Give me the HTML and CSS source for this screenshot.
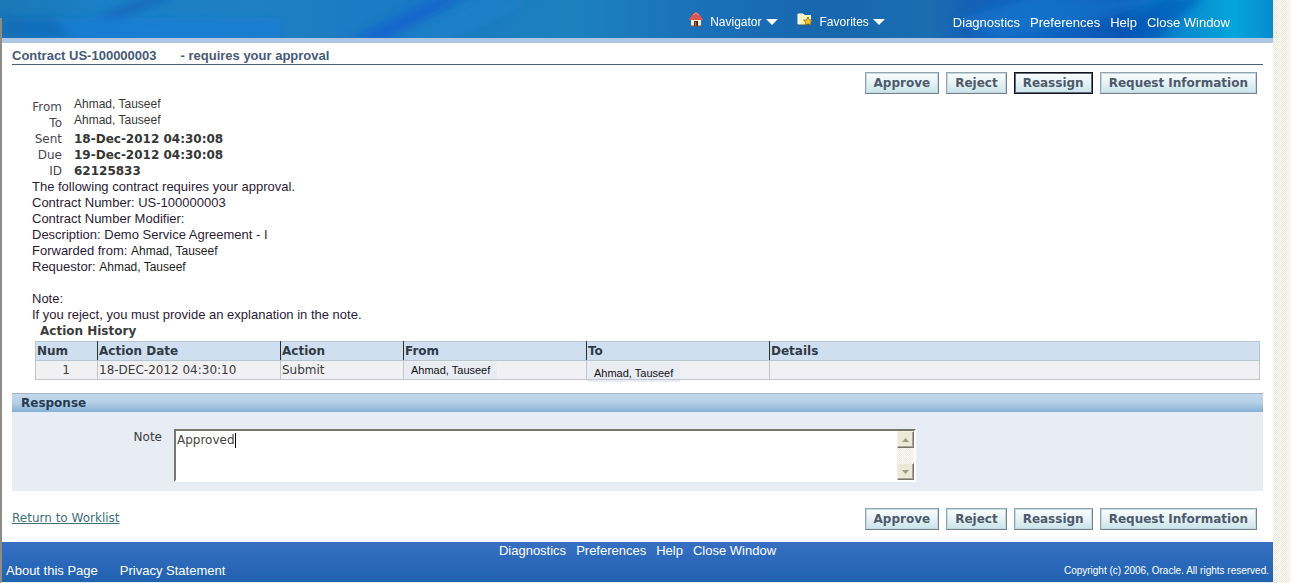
FILE: index.html
```html
<!DOCTYPE html>
<html lang="en">
<head>
<meta charset="utf-8">
<title>Contract approval</title>
<link rel="stylesheet" href="styles.css">
</head>
<body>
<div class="window">
<div class="page">
  <header class="banner">
    <svg class="banner-art" viewBox="0 0 1273 38" preserveAspectRatio="none" aria-hidden="true">
      <defs>
        <linearGradient id="sky" x1="0" x2="1" y1="0" y2="0">
          <stop offset="0" stop-color="#1b78b6"/><stop offset=".08" stop-color="#1a80c6"/><stop offset=".2" stop-color="#1f80c2"/><stop offset=".32" stop-color="#1b78c4"/><stop offset=".45" stop-color="#1c82be"/><stop offset=".54" stop-color="#1a72ba"/><stop offset=".65" stop-color="#1766ae"/><stop offset=".73" stop-color="#1a6eb0"/><stop offset=".76" stop-color="#1560b6"/><stop offset=".81" stop-color="#0f66c2"/><stop offset=".88" stop-color="#0a56b4"/><stop offset=".93" stop-color="#078ad0"/><stop offset=".97" stop-color="#06a5dc"/><stop offset="1" stop-color="#068ad0"/>
        </linearGradient>
        <filter id="soft" x="-20%" y="-50%" width="140%" height="200%"><feGaussianBlur stdDeviation="4"/></filter>
      </defs>
      <rect width="1273" height="38" fill="url(#sky)"/>
      <g filter="url(#soft)">
        <path d="M92 18 150 -4H176L118 18Z" fill="#165ab8" opacity=".65"/>
        <path d="M20 18H280V40H20Z" fill="#147bdc" opacity=".55"/>
        <path d="M2 18H55L70 38H2Z" fill="#1268b4" opacity=".7"/>
        <path d="M350 40 442 -4H466L385 40Z" fill="#1560d0" opacity=".75"/>
        <path d="M395 40 480 0H530L450 40Z" fill="#1882ca" opacity=".7"/>
        <path d="M955 20 1040 -4H1170L1100 20 1000 38Z" fill="#187ed2" opacity=".5"/>
        <path d="M1110 40 1165 -4H1205L1155 40Z" fill="#094eb4" opacity=".5"/>
      </g>
    </svg>
    <nav class="banner-nav" aria-label="Main">
      <button class="menu" type="button">
        <svg class="menu-icon" width="14" height="15" viewBox="0 0 14 15" aria-hidden="true"><path d="M3 1h2v3H3z" fill="#8d3035"/><path d="M2 7h10v7H2z" fill="#f4ebcf"/><path d="M0 7 4 2 7 0l3 2 4 5v1H0z" fill="#d95752"/><path d="M4 3 7 1l3 2" stroke="#ee8f82" fill="none"/><path d="M5 9h4v5H5z" fill="#5c2a20"/><path d="M6.500 10v4" stroke="#a8744a"/><path d="M2 14h10" stroke="#7e552f"/></svg>
        <span>Navigator</span>
        <svg width="12" height="6" viewBox="0 0 12 6" aria-hidden="true"><path d="M0 0h12L6 6z" fill="#fff"/></svg>
      </button>
      <button class="menu" type="button">
        <svg class="menu-icon" width="16" height="14" viewBox="0 0 16 14" aria-hidden="true"><path d="M1 1h5l2 1h6v9H1z" fill="#f7f5bf"/><path d="M1 11V1h5l1 1" stroke="#fff" fill="none"/><path d="M1 11.500h8" stroke="#a9a775"/><path d="m11 4 1.300 2.900 3.200.3-2.400 2.100.7 3.200-2.800-1.700-2.800 1.700.7-3.200-2.400-2.100 3.200-.3z" fill="#f7c821" stroke="#77580c" stroke-width=".7"/></svg>
        <span>Favorites</span>
        <svg width="12" height="6" viewBox="0 0 12 6" aria-hidden="true"><path d="M0 0h12L6 6z" fill="#fff"/></svg>
      </button>
    </nav>
    <nav class="links banner-links" aria-label="Tools">
      <a href="#diagnostics">Diagnostics</a><a href="#preferences">Preferences</a><a href="#help">Help</a><a href="#close">Close Window</a>
    </nav>
  </header>

  <main class="content">
    <h1 class="title"><span>Contract US-100000003</span><span>- requires your approval</span></h1>
    <div class="actions">
      <button class="btn" type="button">Approve</button><button class="btn" type="button">Reject</button><button class="btn btn-default" type="button">Reassign</button><button class="btn" type="button">Request Information</button>
    </div>

    <section class="notice">
      <dl class="facts">
        <dt>From</dt><dd class="person">Ahmad, Tauseef</dd>
        <dt>To</dt><dd class="person">Ahmad, Tauseef</dd>
        <dt>Sent</dt><dd>18-Dec-2012 04:30:08</dd>
        <dt>Due</dt><dd>19-Dec-2012 04:30:08</dd>
        <dt>ID</dt><dd>62125833</dd>
      </dl>
      <p>The following contract requires your approval.<br>Contract Number: US-100000003<br>Contract Number Modifier:<br>Description: Demo Service Agreement - I<br>Forwarded from: <span class="name">Ahmad, Tauseef</span><br>Requestor: <span class="name">Ahmad, Tauseef</span></p>
      <p class="note-text">Note:<br>If you reject, you must provide an explanation in the note.</p>
    </section>

    <section class="history">
      <h2>Action History</h2>
      <table>
        <colgroup><col class="c-num"><col class="c-date"><col class="c-action"><col class="c-from"><col class="c-to"><col></colgroup>
        <thead><tr><th>Num</th><th>Action Date</th><th>Action</th><th>From</th><th>To</th><th>Details</th></tr></thead>
        <tbody><tr><td class="num">1</td><td>18-DEC-2012 04:30:10</td><td>Submit</td><td class="who"><span>Ahmad, Tauseef</span></td><td class="who who-to"><span>Ahmad, Tauseef</span></td><td></td></tr></tbody>
      </table>
    </section>

    <section class="response">
      <h2>Response</h2>
      <div class="field">
        <label for="note">Note</label>
        <div class="editor">
          <textarea id="note" spellcheck="false">Approved</textarea>
          <span class="caret"></span>
          <div class="scroller">
            <button type="button" aria-label="Scroll up"><svg width="7" height="4" viewBox="0 0 7 4"><path d="M0 4 3.500 0 7 4z" fill="#a09d84"/></svg></button>
            <button type="button" aria-label="Scroll down"><svg width="7" height="4" viewBox="0 0 7 4"><path d="M0 0h7L3.500 4z" fill="#a09d84"/></svg></button>
          </div>
        </div>
      </div>
    </section>

    <div class="bottom">
      <a class="return" href="#worklist">Return to Worklist</a>
      <div class="actions">
        <button class="btn" type="button">Approve</button><button class="btn" type="button">Reject</button><button class="btn" type="button">Reassign</button><button class="btn" type="button">Request Information</button>
      </div>
    </div>
  </main>

  <footer class="footer">
    <nav class="links footer-links" aria-label="Footer">
      <a href="#diagnostics">Diagnostics</a><a href="#preferences">Preferences</a><a href="#help">Help</a><a href="#close">Close Window</a>
    </nav>
    <div class="legal">
      <a href="#about">About this Page</a><a href="#privacy">Privacy Statement</a>
      <small>Copyright (c) 2006, Oracle. All rights reserved.</small>
    </div>
  </footer>
</div>
<div class="gutter"></div>
</div>
</body>
</html>
```
FILE: styles.css
```css
* { box-sizing: border-box; }
body { margin: 0; background: #fff; color: #3c3c3c; font: 12px/16px "DejaVu Sans", sans-serif; }
h1, h2, p, dl, dd { margin: 0; }
button { font: inherit; cursor: pointer; }
.window { display: flex; min-height: 100vh; }
.page { flex: 1; min-width: 0; display: flex; flex-direction: column; }
.gutter { width: 19px; background: repeating-conic-gradient(#ece9dc 0 25%, #fffefa 0 50%) 0 0 / 2px 2px; border-right: 2px solid #fdfcf7; }

.banner { position: relative; height: 43px; flex: none; display: flex; align-items: flex-start; justify-content: flex-end; border-bottom: 5px solid #afc6e2; padding: 12px 43px 0 0; color: #fff; font: 12px/20px "Liberation Sans", sans-serif; }
.banner::before { content: ""; position: absolute; z-index: 1; left: 0; top: 18px; width: 2px; height: 25px; background: #8d8d87; }
.banner-art { position: absolute; inset: 0; width: 100%; height: 100%; }
.banner-nav { position: relative; display: flex; gap: 19px; margin-right: 68px; }
.menu { display: flex; align-items: center; gap: 4px; padding: 0; border: 0; background: none; color: inherit; }
.menu-icon { margin: 0 3px 5px 0; }
.links { display: flex; gap: 10px; font: 13px/16px "Liberation Sans", sans-serif; }
.links a, .legal a { color: #fff; text-decoration: none; }
.banner-links { position: relative; padding-top: 3px; }

.content { border-left: 2px solid #8d8d87; padding: 5px 10px 12px; flex: 1; }
.title { display: flex; gap: 24px; border-bottom: 1px solid #4a5f7e; color: #465a77; font: bold 13px/16px "Liberation Sans", sans-serif; }
.actions { display: flex; justify-content: flex-end; gap: 7px; padding: 7px 6px 0 0; }
.btn { height: 22px; padding: 0 8px; border: 1px solid #74818d; border-top-color: #96a6b0; border-left-color: #96a6b0; box-shadow: inset 0 0 0 1px #c3d8df; background: linear-gradient(#fafdfd, #e6f2f5 50%, #c8e4eb); color: #4d5a6c; font: bold 12px/18px "DejaVu Sans", sans-serif; }
.btn-default { border-color: #10131c; box-shadow: inset 0 0 0 1px #626b7b; }

.notice { padding: 5px 0 0 20px; color: #2c1b37; font: 13px/16px "Liberation Sans", sans-serif; }
.facts { display: grid; grid-template-columns: 30px 1fr; column-gap: 12px; font: 12px/16px "DejaVu Sans", sans-serif; color: #4c4550; }
.facts dt { text-align: right; }
.facts dd { font-weight: bold; color: #363636; }
.facts .person { font: 12px/16px "Liberation Sans", sans-serif; margin-top: -3px; }
.name { color: #222; font-size: 12px; }
.note-text { margin-top: 16px; }

.history { padding: 0 3px 0 23px; font-size: 12px; }
.history h2 { font-size: 12px; line-height: 16px; padding-left: 5px; margin-bottom: 2px; }
.history table { width: 100%; table-layout: fixed; border-collapse: collapse; border: 1px solid #bdc3c9; background: #f1f0f3; }
.history th, .history td { height: 19px; padding: 0 1px; text-align: left; line-height: 17px; white-space: nowrap; border: 1px solid #c5c5c9; }
.history th { background: #cfdfef; border-color: #b9c6cf; color: #303a46; }
.history th:not(:last-child) { border-right-color: #26303a; }
.c-num { width: 62px; } .c-date { width: 183px; } .c-action { width: 123px; } .c-from { width: 183px; } .c-to { width: 183px; }
.history .num { text-align: right; padding-right: 27px; }
.history .who span { display: block; width: 93px; margin-left: -1px; padding-left: 7px; background: #eaecf5; color: #111; font: 11px/17px "Liberation Sans", sans-serif; }
.history .who-to span { margin-bottom: -3px; padding-top: 3px; }

.response { margin-top: 13px; background: #e8edf5; min-height: 98px; }
.response h2 { height: 19px; padding-left: 9px; border-top: 1px solid #9fb6ca; background: linear-gradient(#c5d8ea, #b4cfe5 50%, #86b0d5); color: #273b50; font-size: 12px; line-height: 19px; }
.field { display: flex; gap: 12px; padding-top: 17px; font-size: 12px; }
.field label { width: 150px; text-align: right; }
.editor { position: relative; display: flex; width: 742px; height: 53px; border: 2px solid; border-color: #77766d #fff #fff #77766d; background: #fff; }
.editor textarea { flex: 1; resize: none; border: 0; outline: 0; padding: 1px; background: #fff; color: #444; font: 12px/16px "DejaVu Sans", sans-serif; overflow: hidden; }
.caret { position: absolute; left: 59px; top: 2px; width: 1px; height: 15px; background: #000; }
.scroller { display: flex; flex-direction: column; justify-content: space-between; width: 17px; background: repeating-conic-gradient(#ece9dc 0 25%, #fffefa 0 50%) 0 0 / 2px 2px; }
.scroller button { display: flex; align-items: center; justify-content: center; width: 17px; height: 17px; padding: 0; background: #ece9d8; border: 1px solid; border-color: #f3f1e6 #77766d #77766d #f3f1e6; box-shadow: inset -1px -1px #aaa792; }

.bottom { display: flex; justify-content: space-between; align-items: flex-start; padding-top: 10px; }
.return { color: #3d7079; font-size: 12px; margin-top: 9px; }
.footer { flex: none; height: 41px; background: linear-gradient(#3870c3, #1f62b0); border-left: 2px solid #8d8d87; border-bottom: 1px solid #e5edf5; color: #fff; padding-top: 1px; }
.footer-links { justify-content: center; }
.legal { display: flex; gap: 22px; padding: 4px 4px 0; font: 13px/16px "Liberation Sans", sans-serif; }
.legal small { margin-left: auto; font-size: 10px; }
```
